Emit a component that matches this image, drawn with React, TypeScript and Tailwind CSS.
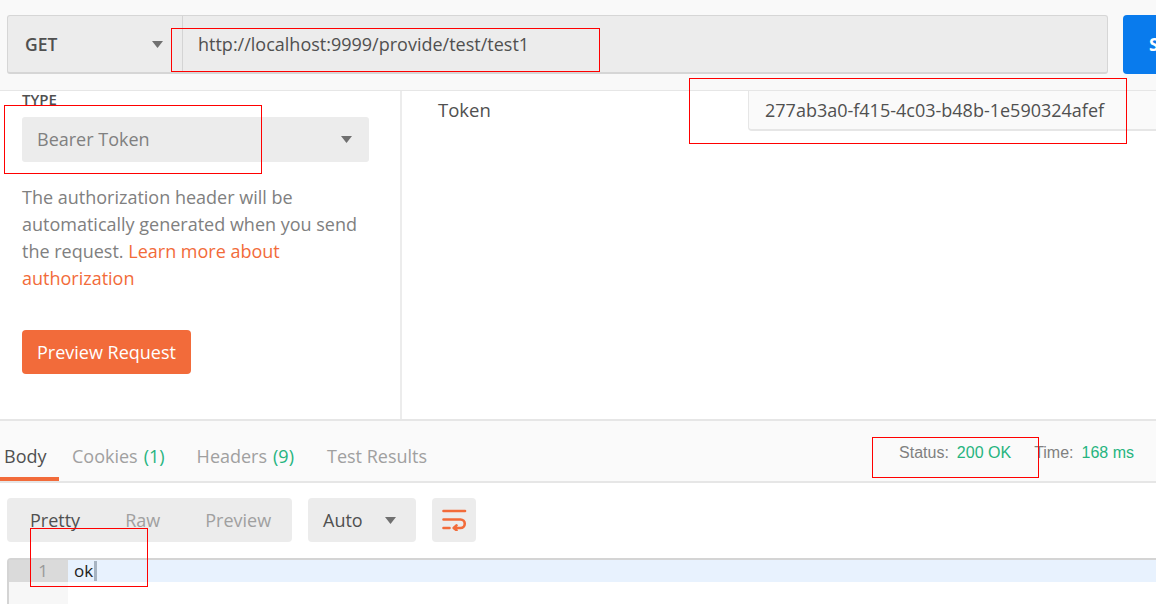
import React from "react";

const Caret = ({ className = "" }: { className?: string }) => (
  <svg width="11" height="7" viewBox="0 0 11 7" className={className}>
    <path d="M0 0 H11 L5.5 7 Z" fill="#707070" />
  </svg>
);

const WrapIcon = () => (
  <svg width="25" height="22" viewBox="0 0 25 22" fill="none" stroke="#f26b3a" strokeWidth="2.6" strokeLinecap="round" strokeLinejoin="round">
    <path d="M1.5 2 H23" />
    <path d="M1.5 10.5 H18.5 a4.25 4.25 0 0 1 0 8.5 H12" />
    <path d="M14.5 16.3 L11.8 19 L14.5 21.2" />
    <path d="M1.5 19 H7.5" />
  </svg>
);

// red annotation boxes drawn over the screenshot
const marks = [
  "left-[171px] top-[28px] w-[429px] h-[44px]",
  "left-[4px] top-[105px] w-[258px] h-[69px]",
  "left-[689px] top-[78px] w-[438px] h-[66px]",
  "left-[872px] top-[437px] w-[167px] h-[41px]",
  "left-[30px] top-[528px] w-[118px] h-[59px]",
];

export default function App() {
  return (
    <div className="relative w-[1156px] h-[604px] overflow-hidden bg-white font-['Open_Sans','Noto_Sans',sans-serif] text-[#505050]">
      {/* request bar */}
      <div className="h-[91px] bg-[#f9f9f9] border-b border-[#e6e6e6] pt-[15px] pl-[7px] flex gap-[15px]">
        <div className="w-[1101px] h-[59px] shrink-0 flex bg-[#ececec] border border-b-2 border-[#d6d6d6] rounded-[3px]">
          <div className="w-[175px] flex items-center justify-between pl-[17px] pr-[19px] border-r border-[#d4d4d4]">
            <span className="text-[17.5px] font-semibold">GET</span>
            <Caret />
          </div>
          <div className="flex items-center pl-[15px] text-[18px]">http://localhost:9999/provide/test/test1</div>
        </div>
        <button className="w-[110px] h-[59px] shrink-0 bg-[#097bed] rounded-[4px] text-white text-[18px] font-bold text-left pl-[26px]">
          Send
        </button>
      </div>

      {/* auth panel */}
      <div className="h-[330px] flex border-b-2 border-[#e6e6e6]">
        <div className="w-[402px] shrink-0 border-r-2 border-[#ececec] pl-[22px] pr-[31px]">
          <div className="text-[15px] leading-[16px] font-semibold uppercase">Type</div>
          <div className="mt-[10px] h-[45px] bg-[#ececec] rounded-[3px] flex items-center justify-between pl-[15px] pr-[17px]">
            <span className="text-[18px] text-[#808080]">Bearer Token</span>
            <Caret />
          </div>
          <p className="mt-[22px] text-[18px] leading-[27px] text-[#808080]">
            The authorization header will be automatically generated when you send the request.{" "}
            <span className="text-[#f26b3a]">Learn more about authorization</span>
          </p>
          <button className="mt-[38px] h-[44px] px-[15px] bg-[#f26b3a] rounded-[4px] text-white text-[18px]">
            Preview Request
          </button>
        </div>
        <div className="flex-1 flex">
          <div className="w-[346px] shrink-0 pl-[36px] pt-[5px] text-[18.5px]">Token</div>
          <div className="w-[440px] h-[40px] shrink-0 bg-[#fafafa] border-l border-b-2 border-[#e6e6e6] rounded-bl-[4px] flex items-center pl-[16px] text-[18px]">
            277ab3a0-f415-4c03-b48b-1e590324afef
          </div>
        </div>
      </div>

      {/* response tabs */}
      <div className="h-[62px] bg-[#fafafa] border-b-2 border-[#e6e6e6] flex items-end justify-between">
        <div className="flex h-full items-stretch text-[18px] text-[#a0a0a0]">
          <div className="w-[59px] pl-[4px] flex items-center text-[#505050] border-b-4 border-[#f26b3a] pt-[14px]">Body</div>
          <div className="ml-[13px] flex items-center pt-[10px]">
            Cookies <span className="ml-[6px] text-[#26b47f]">(1)</span>
          </div>
          <div className="ml-[32px] flex items-center pt-[10px]">
            Headers <span className="ml-[6px] text-[#26b47f]">(9)</span>
          </div>
          <div className="ml-[33px] flex items-center pt-[10px]">Test Results</div>
        </div>
        <div className="self-center mt-[3px] pr-[22px] flex font-['Liberation_Sans',Arial,sans-serif] text-[16px]">
          <span className="text-[#808080]">Status:</span>
          <span className="ml-[8px] text-[#26b47f]">200 OK</span>
          <span className="ml-[23px] text-[#808080]">Time:</span>
          <span className="ml-[8px] text-[#26b47f]">168 ms</span>
        </div>
      </div>

      {/* response toolbar */}
      <div className="mt-[15px] pl-[7px] flex gap-[16px] h-[44px]">
        <div className="w-[285px] bg-[#ececec] rounded-[4px] flex items-center pl-[23px] gap-[45px] text-[18px] text-[#a0a0a0]">
          <span className="text-[#505050]">Pretty</span>
          <span>Raw</span>
          <span>Preview</span>
        </div>
        <div className="w-[108px] bg-[#ececec] rounded-[4px] flex items-center justify-between pl-[15px] pr-[20px] text-[18px]">
          <span>Auto</span>
          <Caret />
        </div>
        <div className="w-[44px] bg-[#ececec] rounded-[4px] flex items-center justify-center">
          <WrapIcon />
        </div>
      </div>

      {/* editor */}
      <div className="mt-[16px] ml-[7px] h-[50px] flex border-t-2 border-l-2 border-[#d4d4d4] rounded-tl-[4px]">
        <div className="w-[59px] shrink-0 bg-[#f7f7f7]">
          <div className="h-[22px] bg-[#dadada] flex items-center justify-end pr-[20px] text-[17px] text-[#999999]">1</div>
        </div>
        <div className="flex-1">
          <div className="h-[22px] bg-[#e8f2fe] flex items-center pl-[6px] text-[17px] text-[#222222]">
            ok
            <span className="ml-[1px] w-[3px] h-[20px] bg-[#a7b4c2]" />
          </div>
        </div>
      </div>

      {marks.map((m) => (
        <div key={m} className={`absolute border border-[#ff0000] pointer-events-none ${m}`} />
      ))}
    </div>
  );
}
